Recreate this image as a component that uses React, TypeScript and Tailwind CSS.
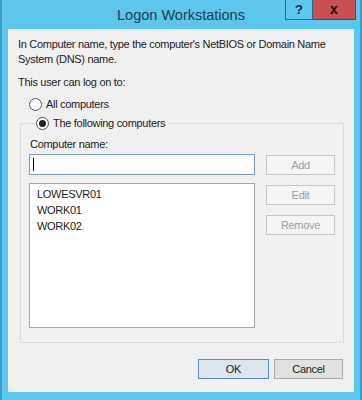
import React from "react";

function Radio({ checked }: { checked?: boolean }) {
  return (
    <span className="flex h-[13px] w-[13px] items-center justify-center rounded-full border border-[#555] bg-white">
      {checked && <span className="h-[7px] w-[7px] rounded-full bg-[#222]" />}
    </span>
  );
}

function SideButton({ label }: { label: string }) {
  return (
    <div className="flex h-[20px] w-[69px] items-center justify-center border border-[#c8c8c8] bg-[#f4f4f4] text-[#a0a0a0]">
      {label}
    </div>
  );
}

export default function App() {
  return (
    <div
      className="flex h-[400px] w-[362px] flex-col border-x-2 border-[#3b9dc8] bg-[#5cc6ec] text-[12px] text-[#1a1a1a]"
      style={{ fontFamily: '"Liberation Sans", Arial, sans-serif' }}
    >
      <div className="relative flex h-[29px] items-center justify-center pt-[2px]">
        <span className="text-[14.5px] text-[#1f3b55]">Logon Workstations</span>
        <div className="absolute right-[4px] top-0 flex h-[20px]">
          <div className="flex w-[28px] items-center justify-center border border-t-0 border-[#2c6a8c] bg-[#5cc6ec] text-[13px] font-bold text-[#0e2a44]">
            ?
          </div>
          <div className="flex w-[43px] items-center justify-center border-b border-r border-[#8a3030] bg-[#c75050] text-[14px] font-bold text-[#1a1010]">
            x
          </div>
        </div>
      </div>
      <div className="mx-[6px] flex h-[363px] flex-col bg-[#f0f0f0] pl-[10px] pr-[10px] pt-[8px] text-[11px] leading-[15px] tracking-[-0.3px] text-[#222]">
        <p>
          In Computer name, type the computer's NetBIOS or Domain Name
          <br />
          System (DNS) name.
        </p>
        <p className="mt-[8px]">This user can log on to:</p>
        <label className="mt-[7px] flex items-center gap-[4px] pl-[11px]">
          <Radio />
          <span>All computers</span>
        </label>
        <fieldset className="ml-[2px] mr-0 mt-[4px] border border-[#dcdcdc] pb-[14px] pl-[8px] pr-[8px]">
          <legend className="ml-[7px] flex items-center gap-[4px] pr-[3px]">
            <Radio checked />
            <span>The following computers</span>
          </legend>
          <div className="mt-[6px] pl-[1px]">Computer name:</div>
          <div className="mt-[2px] flex gap-[11px]">
            <div className="flex flex-col gap-[8px]">
              <div className="flex h-[21px] w-[226px] items-center border border-[#7a9cc6] bg-white pl-[3px]">
                <span className="h-[13px] w-px bg-black" />
              </div>
              <div className="h-[145px] w-[226px] border border-[#a8a8a8] bg-white pl-[7px] pt-[2px] leading-[16px]">
                <div>LOWESVR01</div>
                <div>WORK01</div>
                <div>WORK02</div>
              </div>
            </div>
            <div className="flex flex-col gap-[10px] pt-[1px]">
              <SideButton label="Add" />
              <SideButton label="Edit" />
              <SideButton label="Remove" />
            </div>
          </div>
        </fieldset>
        <div className="mt-[16px] flex justify-end gap-[5px] pr-[1px]">
          <div className="flex h-[20px] w-[71px] items-center justify-center border border-[#5b8fc7] bg-[#dde6f0]">OK</div>
          <div className="flex h-[20px] w-[69px] items-center justify-center border border-[#adadad] bg-[#e1e1e1]">Cancel</div>
        </div>
      </div>
    </div>
  );
}
